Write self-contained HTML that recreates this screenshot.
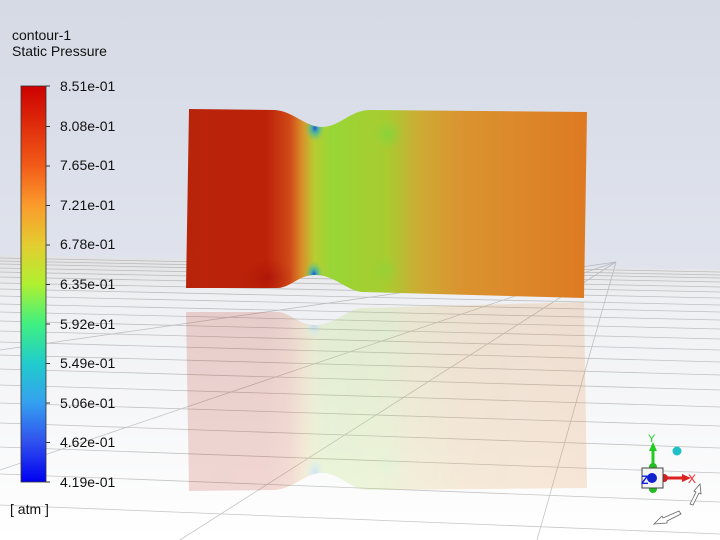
<!DOCTYPE html>
<html><head><meta charset="utf-8"><style>
html,body{margin:0;padding:0;width:720px;height:540px;overflow:hidden;font-family:"Liberation Sans",sans-serif;}
svg{display:block}
</style></head><body>
<svg width="720" height="540" viewBox="0 0 720 540" xmlns="http://www.w3.org/2000/svg">
<defs>
<linearGradient id="sky" x1="0" y1="0" x2="0" y2="1">
<stop offset="0" stop-color="#d5dae5"/><stop offset="0.6" stop-color="#e2e5ee"/><stop offset="1" stop-color="#eceef3"/>
</linearGradient>
<linearGradient id="floor" x1="0" y1="0" x2="0" y2="1">
<stop offset="0" stop-color="#e2e2e4"/><stop offset="0.15" stop-color="#eff0f3"/><stop offset="1" stop-color="#ffffff"/>
</linearGradient>
<linearGradient id="cb" x1="0" y1="0" x2="0" y2="1">
<stop offset="0" stop-color="#cc0000"/><stop offset="0.2" stop-color="#f25a18"/><stop offset="0.3" stop-color="#fb9a2c"/>
<stop offset="0.4" stop-color="#e4cc30"/><stop offset="0.5" stop-color="#b0f030"/><stop offset="0.6" stop-color="#40f080"/>
<stop offset="0.7" stop-color="#20cccc"/><stop offset="0.8" stop-color="#35a0f0"/><stop offset="0.9" stop-color="#3050ee"/>
<stop offset="1" stop-color="#0000f0"/>
</linearGradient>
<linearGradient id="fld" gradientUnits="userSpaceOnUse" x1="186" y1="0" x2="587" y2="0">
<stop offset="0" stop-color="#b8240a"/><stop offset="0.2" stop-color="#bc2208"/><stop offset="0.26" stop-color="#d04a18"/>
<stop offset="0.29" stop-color="#d8902a"/><stop offset="0.32" stop-color="#b8cc30"/><stop offset="0.36" stop-color="#98d636"/>
<stop offset="0.5" stop-color="#a8cc30"/><stop offset="0.58" stop-color="#ccac34"/><stop offset="0.68" stop-color="#da9430"/>
<stop offset="1" stop-color="#de7a22"/>
</linearGradient>
<radialGradient id="blue1"><stop offset="0" stop-color="#2050e0"/><stop offset="0.35" stop-color="#20a8c8" stop-opacity="0.7"/><stop offset="1" stop-color="#60d080" stop-opacity="0"/></radialGradient>
<radialGradient id="grn"><stop offset="0" stop-color="#70d840" stop-opacity="0.8"/><stop offset="1" stop-color="#80d840" stop-opacity="0"/></radialGradient>
<radialGradient id="dred"><stop offset="0" stop-color="#a80c08" stop-opacity="0.6"/><stop offset="1" stop-color="#b01808" stop-opacity="0"/></radialGradient>
<clipPath id="shp"><path d="M189,109 L275,110 C295,112 305,127 322,127 C340,127 350,110 370,110 L587,112 L584,298 L362,292 C345,290 335,275 315,275 C298,275 292,287 278,288 L186,288 Z"/></clipPath>
<g id="field">
<path d="M189,109 L275,110 C295,112 305,127 322,127 C340,127 350,110 370,110 L587,112 L584,298 L362,292 C345,290 335,275 315,275 C298,275 292,287 278,288 L186,288 Z" fill="url(#fld)"/>
<g clip-path="url(#shp)">
<ellipse cx="268" cy="278" rx="25" ry="20" fill="url(#dred)"/>
<ellipse cx="315" cy="128" rx="10" ry="14" fill="url(#blue1)"/>
<ellipse cx="314" cy="274" rx="9" ry="13" fill="url(#blue1)"/>
<ellipse cx="388" cy="134" rx="16" ry="16" fill="url(#grn)" opacity="0.7"/>
<ellipse cx="385" cy="270" rx="16" ry="16" fill="url(#grn)" opacity="0.4"/>
</g>
</g>
</defs>
<rect width="720" height="540" fill="url(#sky)"/>
<path d="M0,255 L720,270 L720,540 L0,540 Z" fill="url(#floor)"/>
<g stroke="#8f8f8f" stroke-width="0.8" fill="none" opacity="0.5">
<path d="M0,258 L720,272"/><path d="M0,261 L720,275"/><path d="M0,264 L720,278"/><path d="M0,268 L720,282"/>
<path d="M0,272 L720,287"/><path d="M0,277 L720,292"/><path d="M0,283 L720,298"/><path d="M0,289 L720,305"/>
<path d="M0,296 L720,312"/><path d="M0,304 L720,320"/><path d="M0,312 L720,329"/><path d="M0,321 L720,339"/>
<path d="M0,331 L720,350"/><path d="M0,342 L720,362"/><path d="M0,355 L720,375"/><path d="M0,369 L720,390"/>
<path d="M0,385 L720,407"/><path d="M0,403 L720,426"/><path d="M0,423 L720,448"/><path d="M0,447 L720,473"/>
<path d="M0,474 L720,502"/><path d="M0,505 L720,534"/>
<path d="M537,540 L616,262"/><path d="M180,540 L616,262"/><path d="M0,470 L616,262"/><path d="M0,350 L616,262"/>
</g>
<use href="#field" transform="matrix(1,0,0,-1,0,600)" opacity="0.17"/>
<use href="#field"/>
<text x="12" y="40" font-size="14" fill="#111">contour-1</text>
<text x="12" y="56" font-size="14" fill="#111">Static Pressure</text>
<rect x="21" y="86" width="25" height="396" fill="url(#cb)" stroke="#333" stroke-width="0.8"/>
<g font-size="14" fill="#111">
<text x="60" y="91">8.51e-01</text><text x="60" y="131">8.08e-01</text><text x="60" y="170">7.65e-01</text>
<text x="60" y="210">7.21e-01</text><text x="60" y="249">6.78e-01</text><text x="60" y="289">6.35e-01</text>
<text x="60" y="329">5.92e-01</text><text x="60" y="368">5.49e-01</text><text x="60" y="408">5.06e-01</text>
<text x="60" y="447">4.62e-01</text><text x="60" y="487">4.19e-01</text>
<text x="10" y="514">[ atm ]</text>
</g>
<g stroke="#333" stroke-width="1">
<path d="M46,126.5h4M46,166h4M46,205.5h4M46,245h4M46,284.5h4M46,324h4M46,363.5h4M46,403h4M46,442.5h4M46,482h4M46,86h4"/>
</g>
<g>
<line x1="653" y1="466" x2="653" y2="449" stroke="#22cc22" stroke-width="3"/>
<path d="M649,451 L653,442 L657,451Z" fill="#22cc22"/>
<text x="648" y="442" font-size="11" fill="#22cc22">Y</text>
<circle cx="677" cy="451" r="4.5" fill="#20c0c8"/>
<line x1="666" y1="478" x2="684" y2="478" stroke="#dd2222" stroke-width="3"/>
<path d="M682,474 L691,478 L682,482Z" fill="#dd2222"/>
<text x="688" y="483" font-size="12" fill="#ff2020">X</text>
<circle cx="653" cy="467" r="4" fill="#22bb22"/><circle cx="653" cy="489" r="4" fill="#22bb22"/>
<circle cx="664" cy="478" r="4" fill="#cc2222"/>
<rect x="642" y="468" width="21" height="20" fill="#f4f4f4" stroke="#444" stroke-width="1"/>
<circle cx="652" cy="478" r="5" fill="#1020cc"/>
<text x="641" y="484" font-size="12" font-weight="bold" fill="#1020dd">Z</text>
<path d="M690,504 L696,492 L694,491 L700,484 L701,494 L699,493 L693,505Z" fill="#fff" stroke="#666" stroke-width="0.8"/>
<path d="M681,514 L667,521 L667,523 L654,524 L662,516 L663,518 L679,511Z" fill="#fff" stroke="#666" stroke-width="0.8"/>
</g>
</svg>
</body></html>
